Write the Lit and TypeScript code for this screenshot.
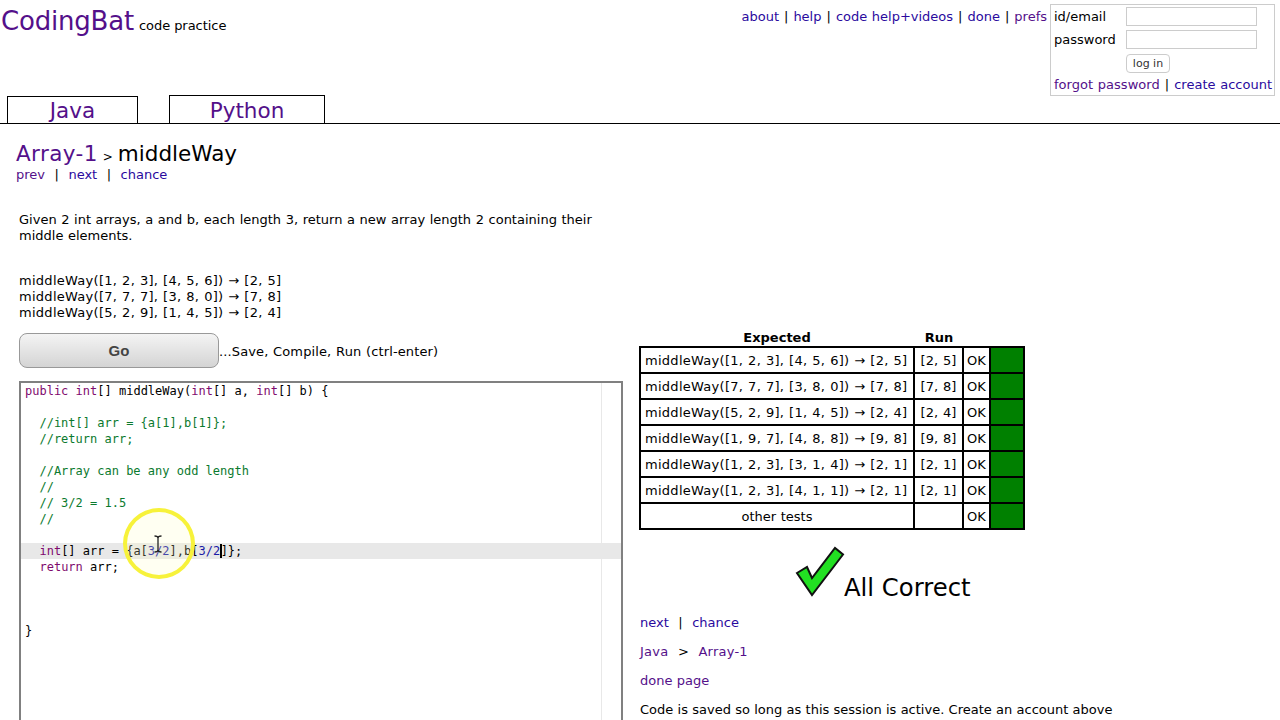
import { LitElement, html, css } from "lit";
import { customElement } from "lit/decorators.js";

const rows = [
  ["middleWay([1, 2, 3], [4, 5, 6]) → [2, 5]", "[2, 5]"],
  ["middleWay([7, 7, 7], [3, 8, 0]) → [7, 8]", "[7, 8]"],
  ["middleWay([5, 2, 9], [1, 4, 5]) → [2, 4]", "[2, 4]"],
  ["middleWay([1, 9, 7], [4, 8, 8]) → [9, 8]", "[9, 8]"],
  ["middleWay([1, 2, 3], [3, 1, 4]) → [2, 1]", "[2, 1]"],
  ["middleWay([1, 2, 3], [4, 1, 1]) → [2, 1]", "[2, 1]"],
];

@customElement("app-root")
export class AppRoot extends LitElement {
  static styles = css`
    :host { display: block; width: 1280px; height: 720px; overflow: hidden; background: #fff; color: #000;
      font-family: "DejaVu Sans", Verdana, sans-serif; font-size: 13px; line-height: 16px; word-spacing: 0.45px; }
    a { text-decoration: none; color: #2a0a9e; }
    a.v { color: #54108a; }
    header { display: flex; height: 95px; }
    .logo { display: flex; align-items: baseline; height: 40px; padding: 3px 0 0 1px; }
    .logo a { font-size: 26px; line-height: 36px; color: #54108a; letter-spacing: -0.2px; }
    .logo span { margin-left: 5px; font-size: 13px; letter-spacing: -0.05px; word-spacing: 0; }
    .nav { margin-left: auto; padding-top: 9px; white-space: nowrap; }
    .sep { margin: 0 5px; }
    .login { margin: 4px 5px 0 3px; width: 225px; height: 92px; border: 1px solid #ccc; box-sizing: border-box; padding: 0 0 0 3px; white-space: nowrap; }
    .lrow { display: flex; align-items: center; height: 23px; }
    .lrow label { width: 72px; }
    .lrow i { display: block; width: 129px; height: 17px; border: 1px solid #ccc; }
    .login button { display: block; width: 44px; height: 19px; padding: 0; border: 1px solid #ccc; border-radius: 4px;
      background: #fff; font: 11px "DejaVu Sans", sans-serif; color: #333; }
    .lrow.btn button { margin: 1px 0 0 72px; }
    .forgot { margin-top: 3px; letter-spacing: 0.03px; }
    .tabs { display: flex; align-items: flex-start; height: 29px; border-bottom: 1px solid #000; padding-left: 7px; box-sizing: border-box; }
    .tab { display: flex; justify-content: center; align-items: center; box-sizing: border-box; border: 1px solid #000; font-size: 21.5px; color: #54108a; background: #fff; }
    .java { width: 131px; height: 27px; margin-top: 1px; border-bottom: none; padding-top: 2px; }
    .python { width: 156px; height: 28px; margin-left: 31px; border-bottom: none; padding-top: 2px; }
    .main { display: grid; grid-template-columns: 640px 1fr; }
    .left { padding-top: 17px; }
    .title { margin-left: 16px; display: flex; align-items: baseline; font-size: 21.5px; line-height: 26px; white-space: nowrap; }
    .title a { color: #54108a; letter-spacing: 0.4px; }
    .title small { font-size: 12px; margin: 0 5px; }
    .links { margin-left: 16px; margin-top: -3px; }
    .links .sep { margin: 0 9.5px; }
    .desc { margin: 29px 0 0 19px; width: 590px; }
    .ex { margin: 29px 0 0 19px; white-space: nowrap; letter-spacing: 0.28px; }
    .go-row { display: flex; align-items: center; margin: 12px 0 0 19px; }
    .go { width: 200px; height: 35px; box-sizing: border-box; border: 1px solid #999; border-radius: 8px;
      background: linear-gradient(#f4f4f4, #d4d4d4); font: bold 15px "Liberation Sans", Arial, sans-serif; color: #444; padding: 0; }
    .go-row span { padding-top: 3px; letter-spacing: 0.12px; }
    .editor { position: relative; margin: 13px 0 0 19px; width: 604px; height: 400px; box-sizing: border-box; border: 2px solid #808080; border-bottom: none;
      font-family: "DejaVu Sans Mono", monospace; font-size: 12px; line-height: 16px; color: #000; word-spacing: 0; }
    .margin { position: absolute; left: 580px; top: 0; bottom: 0; width: 1px; background: #e8e8e8; }
    .l { height: 16px; padding-left: 4px; white-space: pre; position: relative; }
    .l.active { background: #e8e8e8; }
    .kw { color: #7f0a6e; }
    .c { color: #0b7a2e; }
    .n { color: #1a1aa6; }
    .caret { display: inline-block; width: 1.5px; height: 14px; background: #000; vertical-align: -3px; margin: 0 -1px 0 0; }
    .highlight { position: absolute; left: 102px; top: 125px; width: 64px; height: 63px; border: 4px solid #f7f23a; border-radius: 50%;
      background: rgba(255, 255, 190, 0.2); }
    .cursor { position: absolute; left: 132px; top: 152px; }
    .right { padding-top: 206px; }
    .heads { display: flex; font-weight: bold; height: 16px; }
    .heads .a { width: 274px; text-align: center; }
    .heads .b { width: 50px; text-align: center; }
    table { border-collapse: collapse; width: 386px; margin-left: -1px; table-layout: fixed; letter-spacing: 0.28px; }
    td { border: 2px solid #000; height: 26px; padding: 1px 0 0; white-space: nowrap; box-sizing: border-box; }
    td.e { width: 274px; padding-left: 4px; }
    td.e.center { text-align: center; padding-left: 0; letter-spacing: 0; }
    td.r { width: 49px; text-align: center; letter-spacing: 0.1px; }
    td.o { width: 27px; text-align: center; letter-spacing: 0; }
    td.g { background: #008000; }
    .ok { display: flex; align-items: flex-end; margin: 15px 0 0 156px; height: 52px; }
    .ok svg { display: block; overflow: visible; flex: none; }
    .ok span { font-size: 24.3px; line-height: 30px; margin-bottom: -6px; word-spacing: 0; }
    .nav2 { margin-top: 18px; }
    .p { margin-top: 13px; word-spacing: 0.15px; }
    .nav2 .sep, .p .sep { margin: 0 9.5px; }
    .p .wide { letter-spacing: 0.25px; }
  `;

  render() {
    return html`
      <header>
        <div class="logo"><a href="#">CodingBat</a><span>code practice</span></div>
        <div class="nav">
          <a href="#">about</a><span class="sep">|</span><a href="#">help</a><span class="sep">|</span><a href="#">code help+videos</a><span class="sep">|</span><a href="#">done</a><span class="sep">|</span><a class="v" href="#">prefs</a>
        </div>
        <div class="login">
          <div class="lrow"><label>id/email</label><i></i></div>
          <div class="lrow"><label>password</label><i></i></div>
          <div class="lrow btn"><button>log in</button></div>
          <div class="forgot"><a class="v" href="#">forgot password</a><span class="sep">|</span><a href="#">create account</a></div>
        </div>
      </header>
      <div class="tabs">
        <div class="tab java">Java</div>
        <div class="tab python">Python</div>
      </div>
      <div class="main">
        <div class="left">
          <div class="title"><a href="#">Array-1</a><small>&gt;</small><span>middleWay</span></div>
          <div class="links"><a class="v" href="#">prev</a><span class="sep">|</span><a href="#">next</a><span class="sep">|</span><a href="#">chance</a></div>
          <div class="desc">Given 2 int arrays, a and b, each length 3, return a new array length 2 containing their middle elements.</div>
          <div class="ex">middleWay([1, 2, 3], [4, 5, 6]) → [2, 5]<br />middleWay([7, 7, 7], [3, 8, 0]) → [7, 8]<br />middleWay([5, 2, 9], [1, 4, 5]) → [2, 4]</div>
          <div class="go-row"><button class="go">Go</button><span>...Save, Compile, Run (ctrl-enter)</span></div>
          <div class="editor">
            <div class="margin"></div>
            <div class="l"><span class="kw">public</span> <span class="kw">int</span>[] middleWay(<span class="kw">int</span>[] a, <span class="kw">int</span>[] b) {</div>
            <div class="l"></div>
            <div class="l c">  //int[] arr = {a[1],b[1]};</div>
            <div class="l c">  //return arr;</div>
            <div class="l"></div>
            <div class="l c">  //Array can be any odd length</div>
            <div class="l c">  //</div>
            <div class="l c">  // 3/2 = 1.5</div>
            <div class="l c">  //</div>
            <div class="l"></div>
            <div class="l active">  <span class="kw">int</span>[] arr = {a[<span class="n">3/2</span>],b[<span class="n">3/2</span><span class="caret"></span>]};</div>
            <div class="l">  <span class="kw">return</span> arr;</div>
            <div class="l"></div>
            <div class="l"></div>
            <div class="l"></div>
            <div class="l">}</div>
            <div class="highlight"></div>
            <svg class="cursor" width="10" height="18" viewBox="0 0 10 18" fill="none" stroke="#222" stroke-width="1.3">
              <path d="M1.5 1 Q5 1 5 3 V15 Q5 17 1.5 17 M8.5 1 Q5 1 5 3 M5 15 Q5 17 8.5 17" />
            </svg>
          </div>
        </div>
        <div class="right">
          <div class="heads"><div class="a">Expected</div><div class="b">Run</div></div>
          <table>
            ${rows.map(
              ([e, r]) => html`<tr><td class="e">${e}</td><td class="r">${r}</td><td class="o">OK</td><td class="g"></td></tr>`
            )}
            <tr><td class="e center">other tests</td><td class="r"></td><td class="o">OK</td><td class="g"></td></tr>
          </table>
          <div class="ok">
            <svg width="48" height="50" viewBox="0 0 48 50">
              <path d="M1 26 L11 20 L16 31 L39 1 L47 7.5 L16 48 Z" fill="#22e022" stroke="#111" stroke-width="2" stroke-linejoin="miter" />
            </svg>
            <span>All Correct</span>
          </div>
          <div class="nav2"><a href="#">next</a><span class="sep">|</span><a href="#">chance</a></div>
          <div class="p"><a class="v wide" href="#">Java</a><span class="sep">&gt;</span><a class="v wide" href="#">Array-1</a></div>
          <div class="p"><a class="v" href="#">done page</a></div>
          <div class="p">Code is saved so long as this session is active. Create an account above</div>
        </div>
      </div>
    `;
  }
}
